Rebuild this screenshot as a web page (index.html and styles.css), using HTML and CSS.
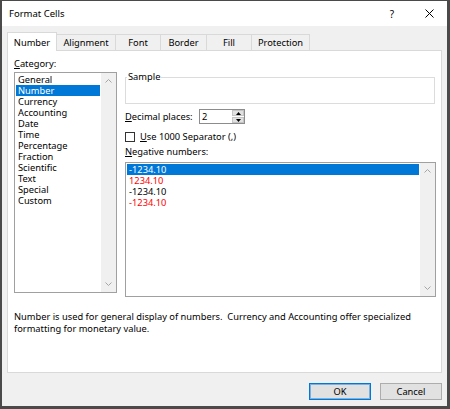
FILE: index.html
```html
<!DOCTYPE html>
<html lang="en">
<head>
<meta charset="utf-8">
<title>Format Cells</title>
<link rel="stylesheet" href="styles.css">
</head>
<body>
<div class="window">
  <div class="titlebar">
    <span class="title">Format Cells</span>
    <span class="help">?</span>
    <svg class="close" width="9" height="9" viewBox="0 0 9 9"><path d="M0.5 0.5L8.5 8.5M8.5 0.5L0.5 8.5" stroke="#000" stroke-width="1" fill="none"/></svg>
  </div>
  <div class="body">
    <div class="tabs">
      <div class="tab active">Number</div>
      <div class="tab">Alignment</div>
      <div class="tab">Font</div>
      <div class="tab">Border</div>
      <div class="tab">Fill</div>
      <div class="tab">Protection</div>
    </div>
    <div class="panel">
      <div class="columns">
        <div class="left">
          <div class="label"><u>C</u>ategory:</div>
          <div class="listbox cat">
            <div class="items">
              <div class="item">General</div>
              <div class="item selected">Number</div>
              <div class="item">Currency</div>
              <div class="item">Accounting</div>
              <div class="item">Date</div>
              <div class="item">Time</div>
              <div class="item">Percentage</div>
              <div class="item">Fraction</div>
              <div class="item">Scientific</div>
              <div class="item">Text</div>
              <div class="item">Special</div>
              <div class="item">Custom</div>
            </div>
            <div class="scrollbar">
              <svg width="7" height="4" viewBox="0 0 7 4"><path d="M0.5 3.5L3.5 0.5L6.5 3.5" stroke="#a6a6a6" fill="none"/></svg>
              <svg width="7" height="4" viewBox="0 0 7 4"><path d="M0.5 0.5L3.5 3.5L6.5 0.5" stroke="#a6a6a6" fill="none"/></svg>
            </div>
          </div>
        </div>
        <div class="right">
          <div class="sample"><span class="sample-legend">Sample</span></div>
          <div class="decimal-row">
            <span class="decimal-label"><u>D</u>ecimal places:</span>
            <div class="spin">
              <span class="spin-value">2</span>
              <div class="spin-btns">
                <div class="spin-btn"><svg width="5" height="3" viewBox="0 0 5 3"><path d="M0 3L2.5 0L5 3Z" fill="#000"/></svg></div>
                <div class="spin-btn"><svg width="5" height="3" viewBox="0 0 5 3"><path d="M0 0L2.5 3L5 0Z" fill="#000"/></svg></div>
              </div>
            </div>
          </div>
          <div class="check-row">
            <span class="checkbox"></span>
            <span><u>U</u>se 1000 Separator (,)</span>
          </div>
          <div class="label neg-label"><u>N</u>egative numbers:</div>
          <div class="listbox neg">
            <div class="items">
              <div class="item selected">-1234.10</div>
              <div class="item red">1234.10</div>
              <div class="item">-1234.10</div>
              <div class="item red">-1234.10</div>
            </div>
            <div class="scrollbar">
              <svg width="7" height="4" viewBox="0 0 7 4"><path d="M0.5 3.5L3.5 0.5L6.5 3.5" stroke="#a6a6a6" fill="none"/></svg>
              <svg width="7" height="4" viewBox="0 0 7 4"><path d="M0.5 0.5L3.5 3.5L6.5 0.5" stroke="#a6a6a6" fill="none"/></svg>
            </div>
          </div>
        </div>
      </div>
      <p class="desc">Number is used for general display of numbers.&nbsp; Currency and Accounting offer specialized<br>formatting for monetary value.</p>
    </div>
    <div class="buttons">
      <button class="btn default">OK</button>
      <button class="btn">Cancel</button>
    </div>
  </div>
</div>
</body>
</html>
```
FILE: styles.css
```css
body {
  margin: 0;
  font-family: "Noto Sans", "DejaVu Sans", sans-serif;
  font-size: 9.3px;
  color: #000;
}

.window {
  width: 450px;
  height: 409px;
  box-sizing: border-box;
  border-style: solid;
  border-color: #4a4a4a;
  border-width: 1px 3px 3px 2px;
  background: #f0f0f0;
  display: flex;
  flex-direction: column;
}

.titlebar {
  flex: none;
  height: 25px;
  background: #fff;
  display: flex;
  align-items: center;
  padding-left: 7px;
}

.title {
  flex: 1;
  font-size: 9.5px;
}

.help {
  font-size: 10px;
  margin-right: 31px;
}

.close {
  margin-right: 13px;
}

.body {
  flex: 1;
  padding: 6px 5px 0 5px;
  display: flex;
  flex-direction: column;
}

.tabs {
  display: flex;
  align-items: flex-end;
  height: 19px;
  margin-bottom: -1px;
  position: relative;
  z-index: 1;
}

.tab {
  box-sizing: border-box;
  height: 16px;
  margin-bottom: 1px;
  margin-left: -1px;
  border: 1px solid #d9d9d9;
  border-bottom: none;
  background: #f0f0f0;
  text-align: center;
  line-height: 15px;
  white-space: nowrap;
}

.tab.active {
  height: 19px;
  margin-bottom: 0;
  margin-left: 0;
  background: #fff;
  padding-top: 1px;
  line-height: 17px;
  position: relative;
  z-index: 2;
}

.tab:nth-child(1) { width: 50px; }
.tab:nth-child(2) { width: 60px; }
.tab:nth-child(3) { width: 46px; }
.tab:nth-child(4) { width: 47px; }
.tab:nth-child(5) { width: 46px; }
.tab:nth-child(6) { width: 59px; }

.panel {
  box-sizing: border-box;
  height: 323px;
  background: #fff;
  border: 1px solid #d9d9d9;
  padding: 7px 5px 0 6px;
}

.columns {
  display: grid;
  grid-template-columns: 103px 311px;
  column-gap: 8px;
}

.label {
  line-height: 12px;
  white-space: nowrap;
}

.listbox {
  box-sizing: border-box;
  border: 1px solid #a0a0a0;
  background: #fff;
  display: flex;
}

.cat {
  height: 221px;
  margin-top: 2px;
}

.items {
  flex: 1;
  padding: 1px;
}

.item {
  height: 11px;
  line-height: 11px;
  padding-left: 2px;
  white-space: nowrap;
}

.item.selected {
  background: #0078d7;
  color: #fff;
}

.item.red {
  color: #ff0000;
}

.scrollbar {
  width: 15px;
  background: #f0f0f0;
  display: flex;
  flex-direction: column;
  justify-content: space-between;
  align-items: center;
  padding: 6px 0;
  box-sizing: border-box;
}

.scrollbar svg {
  display: block;
}

.sample {
  position: relative;
  box-sizing: border-box;
  height: 27px;
  margin-top: 19px;
  margin-right: 1px;
  border: 1px solid #dcdcdc;
}

.sample-legend {
  position: absolute;
  top: -7px;
  left: 1px;
  padding: 0 1px;
  background: #fff;
  line-height: 12px;
}

.decimal-row {
  display: flex;
  align-items: center;
  margin-top: 5px;
  height: 15px;
}

.decimal-label {
  width: 74px;
  white-space: nowrap;
}

.spin {
  box-sizing: border-box;
  width: 46px;
  height: 15px;
  border: 1px solid #8c8c8c;
  display: flex;
  align-items: center;
}

.spin-value {
  flex: 1;
  padding-left: 2px;
  line-height: 13px;
}

.spin-btns {
  width: 12px;
  height: 13px;
  display: flex;
  flex-direction: column;
  gap: 1px;
}

.spin-btn {
  flex: 1;
  background: #e1e1e1;
  border: 1px solid #c4c4c4;
  box-sizing: border-box;
  display: flex;
  align-items: center;
  justify-content: center;
}

.spin-btn svg {
  display: block;
}

.check-row {
  display: flex;
  align-items: center;
  gap: 5px;
  height: 12px;
  margin-top: 7px;
  line-height: 12px;
}

.checkbox {
  box-sizing: border-box;
  width: 10px;
  height: 10px;
  border: 1px solid #333;
  background: #fff;
}

.neg-label {
  margin-top: 3px;
}

.neg {
  height: 135px;
  margin-top: 4px;
}

.desc {
  margin: 14px 0 0 0;
  line-height: 12px;
  white-space: nowrap;
}

.buttons {
  display: flex;
  justify-content: flex-end;
  gap: 9px;
  margin-top: 10px;
}

.btn {
  box-sizing: border-box;
  width: 62px;
  height: 17px;
  padding: 0;
  border: 1px solid #adadad;
  background: #e1e1e1;
  font: inherit;
  color: #000;
  line-height: 15px;
}

.btn.default {
  border-color: #0078d7;
  box-shadow: inset 0 0 0 1px rgba(0, 120, 215, 0.45);
}
```
